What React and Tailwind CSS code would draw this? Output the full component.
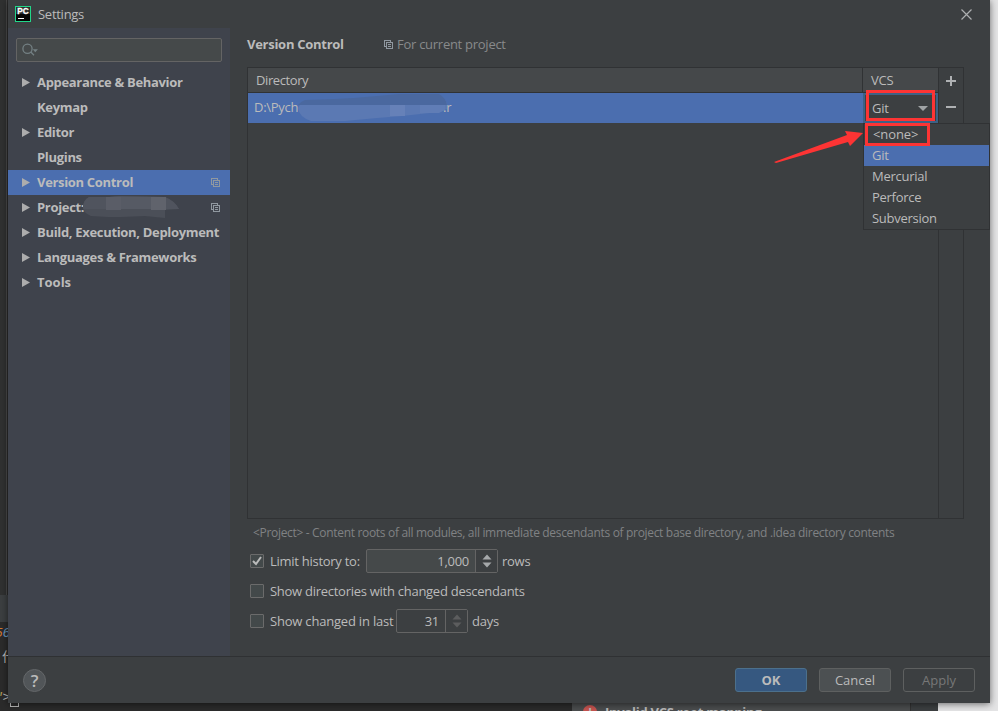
import React from 'react';

const treeItems = [
  { label: 'Appearance & Behavior', arrow: true },
  { label: 'Keymap' },
  { label: 'Editor', arrow: true },
  { label: 'Plugins' },
  { label: 'Version Control', arrow: true, selected: true, copy: true },
  { label: 'Project:', arrow: true, copy: true, redacted: true },
  { label: 'Build, Execution, Deployment', arrow: true },
  { label: 'Languages & Frameworks', arrow: true },
  { label: 'Tools', arrow: true },
];

const vcsOptions = ['<none>', 'Git', 'Mercurial', 'Perforce', 'Subversion'];

const CopyIcon = ({ className }) => (
  <svg className={className} width="9" height="9" viewBox="0 0 9 9" fill="none" stroke="#9098a0" shapeRendering="crispEdges">
    <path d="M2.5 6.5H0.5V0.5H6.5V2.5" />
    <path d="M2.5 2.5H8.5V8.5H2.5Z M4 4.5H7 M4 6.5H7" />
  </svg>
);

const Logo = () => (
  <svg width="16" height="16" viewBox="0 0 16 16">
    <rect width="16" height="16" fill="#21d789" />
    <rect x="1" y="1" width="14" height="14" fill="#050505" />
    <rect x="1" y="1" width="14" height="7" fill="#2a2d2c" />
    <text x="2.2" y="8.4" fill="#fff" stroke="#fff" strokeWidth="0.3" fontSize="8.4" fontWeight="700" letterSpacing="0" fontFamily="Liberation Sans, sans-serif" textLength="11.4" lengthAdjust="spacingAndGlyphs">PC</text>
    <rect x="3" y="12" width="6" height="1" fill="#fff" />
  </svg>
);

const Spinner = ({ value, wide, disabled }) => (
  <div className={`flex h-6 rounded-[2px] border border-[#646464] ${wide ? 'w-[132px] bg-[#45494a]' : 'w-[72px] bg-[#3c3f41]'}`}>
    <div className="flex-1 pr-[6px] text-right leading-[23px]">{value}</div>
    <div className="flex w-[22px] items-center justify-center border-l border-[#646464] bg-[#3c3f41]">
      <svg width="10" height="14" viewBox="0 0 10 14" fill={disabled ? '#5c5d5e' : '#a5a8aa'}>
        <path d="M0.5 5.5L5 0.5L9.5 5.5Z M0.5 8.5H9.5L5 13.5Z" />
      </svg>
    </div>
  </div>
);

const Checkbox = ({ checked }) => (
  <span className="flex h-[14px] w-[14px] shrink-0 items-center justify-center rounded-[1px] border border-[#6b6b6b] bg-[#43494a]">
    {checked && (
      <svg width="10" height="10" viewBox="0 0 10 10" fill="none" stroke="#bbbbbb" strokeWidth="2">
        <path d="M1 5L4 8L9 1" />
      </svg>
    )}
  </span>
);

const Sidebar = () => (
  <aside className="w-[222px] shrink-0 bg-[#3f434c] pt-[10px]">
    <div className="ml-2 flex h-6 w-[206px] items-center rounded-[2px] border border-[#646464] bg-[#45494a] pl-[5px]">
      <svg width="18" height="14" viewBox="0 0 18 14" fill="none" stroke="#748084" strokeWidth="1.3">
        <circle cx="5.5" cy="5.7" r="4.6" />
        <path d="M8.8 9L12 12.3" />
        <path d="M10.7 6.3H15.9L13.3 9.2Z" fill="#748084" stroke="none" />
      </svg>
    </div>
    <ul className="mt-2 font-bold tracking-[-0.32px]">
      {treeItems.map((item) => (
        <li
          key={item.label}
          className={`flex h-[25px] items-center pl-[14px] pr-[10px] whitespace-nowrap ${item.selected ? 'bg-[#4b6eaf]' : ''}`}
        >
          <span className="w-[15px] shrink-0">
            {item.arrow && (
              <svg width="8" height="9" viewBox="0 0 8 9" fill="#adadad">
                <path d="M0 0L8 4.5L0 9Z" />
              </svg>
            )}
          </span>
          <span className={`-mt-[2px] ${item.label === 'Tools' ? 'tracking-normal' : ''}`}>{item.label}</span>
          {item.redacted && (
            <svg className="-ml-px -mt-[2px]" width="97" height="22" viewBox="0 0 97 22">
              <path d="M6 1H26L36 0L82 1Q92 5 96 13L82 14V22L62 20L38 21H25L8 20Q0 17 0 11Q0 4 6 1Z" fill="#4b4f58" />
              <path d="M6 1H26L36 0L82 1Q92 5 96 13H0Q0 4 6 1Z" fill="#50545e" />
              <path d="M23 1H38V14H23Z" fill="#5a5d67" />
              <path d="M38 1H68V13H38Z" fill="#565a64" />
              <path d="M68 1H83V14H68Z" fill="#60636c" />
            </svg>
          )}
          {item.copy && <CopyIcon className="ml-auto" />}
        </li>
      ))}
    </ul>
  </aside>
);

const VcsPopup = () => (
  <ul className="absolute top-[123px] left-[855px] w-[127px] border border-[#303234] bg-[#3c3f41]">
    {vcsOptions.map((option) => (
      <li key={option} className={`h-[21px] pl-2 leading-[21px] ${option === 'Git' ? 'bg-[#4b6eaf]' : ''} ${option === '<none>' ? 'pl-[9px] tracking-[-0.1px]' : ''}`}>
        {option}
      </li>
    ))}
  </ul>
);

const RootsTable = () => (
  <div className="flex h-[452px] w-[717px] border border-[#303234]">
    <div className="flex-1">
      <div className="flex h-[25px] border-b border-[#303234] bg-[#45484a] leading-[25px]">
        <div className="flex-1 pl-2 tracking-[-0.4px]">Directory</div>
        <div className="w-[76px] border-l border-[#303234] pl-2">VCS</div>
      </div>
      <div className="flex h-[30px] bg-[#4b6eaf]">
        <div className="flex flex-1 items-center pl-[6px]">
          <span className="-mt-[2px] w-[43px]">D:\Pych</span>
          <svg width="152" height="28" viewBox="0 0 152 28">
            <path d="M8 7L55 5L80 3L105 1L142 1Q149 4 150 11V15L142 18L105 22L80 24L48 27H14Q2 23 1 14Q3 9 8 7Z" fill="#5b79b3" />
            <path d="M8 6L37 5L57 4L80 2L102 0H142Q149 4 150 11H1Q3 8 8 6Z" fill="#4a689f" />
            <path d="M93 11H108V22H93Z" fill="#6681b8" />
            <path d="M123 11H148V16L142 19H123Z" fill="#607db6" />
          </svg>
          <span className="-mt-[2px] -ml-[6px]">.r</span>
        </div>
        <div className="flex w-[75px] items-center justify-between border-2 border-[#3d6185] bg-[#3c3f41] pr-2 pl-[7px]">
          <span>Git</span>
          <svg width="10" height="5" viewBox="0 0 10 5" fill="#a0a3a5">
            <path d="M0 0H10L5 5Z" />
          </svg>
        </div>
      </div>
    </div>
    <div className="flex w-[25px] flex-col items-center border-l border-[#303234] pt-2">
      <svg width="10" height="36" viewBox="0 0 10 36" fill="#afb1b3" shapeRendering="crispEdges">
        <path d="M0 4H10V6H0Z M4 0H6V10H4Z M0 30H10V32H0Z" />
      </svg>
    </div>
  </div>
);

const Annotations = () => (
  <svg className="pointer-events-none absolute top-0 left-0" width="982" height="240" viewBox="8 0 982 240" fill="none">
    <path d="M867.5 91.5H933.5V119.5H867.5Z M866.5 124.5H928.5V144.5H866.5Z" stroke="#fd3434" strokeWidth="3" />
    <path d="M774 162L847 135L845 131L863 133L850 146L848 142L776 163Z" fill="#fd3434" />
  </svg>
);

const Dialog = () => (
  <div className="absolute top-0 left-2 flex h-[703px] w-[982px] flex-col bg-[#3c3f41] shadow-[0_1px_7px_rgba(0,0,0,0.55)]">
    <header className="flex h-7 shrink-0 items-center pl-[7px]">
      <Logo />
      <span className="ml-[7px]">Settings</span>
      <svg className="mr-[18px] ml-auto" width="11" height="11" viewBox="0 0 11 11" stroke="#adafb0" strokeWidth="1.2">
        <path d="M0.5 0.5L10.5 10.5M10.5 0.5L0.5 10.5" />
      </svg>
    </header>
    <div className="flex min-h-0 flex-1">
      <Sidebar />
      <main className="flex-1 pl-[17px] whitespace-nowrap">
        <div className="flex h-[39px] items-center pb-[6px]">
          <h1 className="-mt-[2px] w-[137px] font-bold">Version Control</h1>
          <CopyIcon />
          <span className="-mt-[2px] ml-1 text-[#888a8b]">For current project</span>
        </div>
        <RootsTable />
        <p className="mt-[5px] pl-[6px] text-[12px] leading-[18px] tracking-[-0.32px] text-[#808284]">
          {'<Project> - Content roots of all modules, all immediate descendants of project base directory, and .idea directory contents'}
        </p>
        <div className="mt-[7px] flex h-6 items-center pl-[3px]">
          <Checkbox checked />
          <span className="ml-[6px] w-[96px]">Limit history to:</span>
          <Spinner value="1,000" wide />
          <span className="ml-1">rows</span>
        </div>
        <div className="mt-[6px] flex h-6 items-center pl-[3px]">
          <Checkbox />
          <span className="ml-[6px]">Show directories with changed descendants</span>
        </div>
        <div className="mt-[6px] flex h-6 items-center pl-[3px]">
          <Checkbox />
          <span className="ml-[6px] w-[126px] tracking-[-0.2px]">Show changed in last</span>
          <Spinner value="31" disabled />
          <span className="ml-1">days</span>
        </div>
      </main>
    </div>
    <footer className="flex h-[47px] shrink-0 items-center gap-3 border-t border-[#2f3133] pr-[15px] pl-[15px] tracking-normal">
      <button className="mt-px mr-auto flex h-[23px] w-[23px] items-center justify-center rounded-full border border-[#646769] bg-[#515558] text-[17px] font-semibold">
        ?
      </button>
      <button className="h-6 w-[72px] rounded-[3px] border border-[#4c708c] bg-[#365880] font-bold">OK</button>
      <button className="h-6 w-[72px] rounded-[3px] border border-[#5e6060] bg-[#4c5052]">Cancel</button>
      <button className="h-6 w-[72px] rounded-[3px] border border-[#5e6060] text-[#777777]">Apply</button>
    </footer>
    <VcsPopup />
    <Annotations />
  </div>
);

const App = () => (
  <div
    className="relative h-[711px] w-[998px] overflow-hidden bg-[#e4e4e5] text-[13px] leading-[18px] tracking-[-0.27px] text-[#bbbbbb]"
    style={{ fontFamily: '"Open Sans", "Noto Sans CJK SC", sans-serif' }}
  >
    {/* editor window behind the dialog */}
    <div className="absolute top-0 left-0 h-[711px] w-[938px] overflow-hidden bg-[#2b2b2b]">
      <div className="h-[595px] w-[7px] border-r border-[#4a4a4a] bg-[#303131]" />
      <div className="h-[27px] w-2 bg-[#3c3f41]" />
      <span className="absolute top-[625px] -left-[5px] font-mono text-[#6897bb] italic">
        <i className="text-[#cc7832]">5</i>6
      </span>
      <span className="absolute top-[647px] left-[2px]">什</span>
      <span className="absolute top-[689px] -left-[5px] font-mono">
        <i className="text-[#b09a50]">"</i>&gt;
      </span>
      <span className="absolute top-[695px] left-[10px] h-3 w-[9px] border border-[#bbbbbb]" />
      <div className="absolute top-[690px] left-[572px] flex h-10 w-[338px] bg-[#4b4d4e] pt-[13px] pl-[11px]">
        <span className="mt-[2px] h-[14px] w-[14px] rounded-full bg-[#c75450] text-center text-[11px] leading-[14px] font-bold">!</span>
        <span className="ml-2 font-bold">Invalid VCS root mapping</span>
      </div>
      <div className="absolute top-[690px] left-[910px] h-6 w-7 border-l border-[#323232] bg-[#3c3f41]" />
    </div>
    <Dialog />
  </div>
);

export default App;
